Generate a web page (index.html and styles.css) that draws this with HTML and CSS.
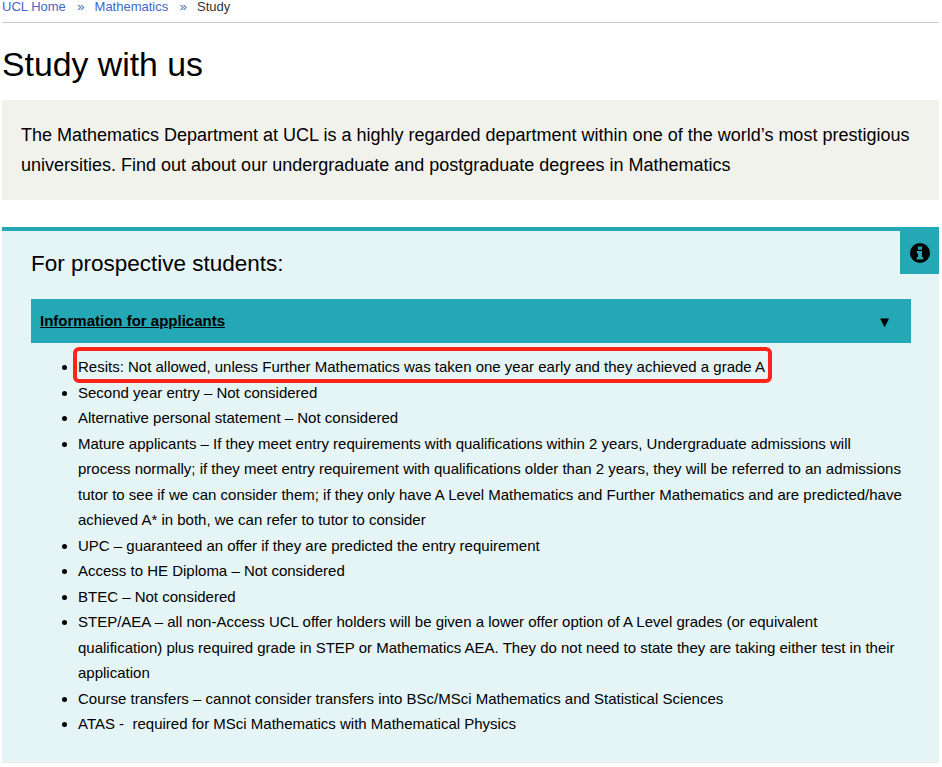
FILE: index.html
```html
<!DOCTYPE html>
<html lang="en">
<head>
  <meta charset="UTF-8" />
  <meta name="viewport" content="width=device-width, initial-scale=1" />
  <title>Study with us</title>
  <link rel="stylesheet" href="styles.css">
</head>
<body>
  <div class="page">
    <nav class="breadcrumb">
      <a href="#">UCL Home</a>
      <span class="sep">»</span>
      <a href="#">Mathematics</a>
      <span class="sep">»</span>
      <span>Study</span>
    </nav>

    <h1>Study with us</h1>

    <div class="intro">
      The Mathematics Department at UCL is a highly regarded department within one of the world’s most prestigious universities. Find out about our undergraduate and postgraduate degrees in Mathematics
    </div>

    <div class="panel">
      <div class="panel-icon">
        <svg width="20" height="20" viewBox="0 0 20 20">
          <circle cx="10" cy="10" r="10" fill="#000" />
          <rect x="8" y="3.5" width="4" height="3.2" fill="#25a8b6" />
          <path d="M6.8 8h5.2v6h1.2v2.6H6.8V14H8v-3.4H6.8z" fill="#25a8b6" />
        </svg>
      </div>
      <h2>For prospective students:</h2>

      <div class="accordion">
        <a href="#">Information for applicants</a>
        <span class="arrow">▼</span>
      </div>

      <ul class="info-list">
        <li class="marked">Resits: Not allowed, unless Further Mathematics was taken one year early and they achieved a grade A<span class="red-box"></span></li>
        <li>Second year entry – Not considered</li>
        <li>Alternative personal statement – Not considered</li>
        <li>Mature applicants – If they meet entry requirements with qualifications within 2 years, Undergraduate admissions will process normally; if they meet entry requirement with qualifications older than 2 years, they will be referred to an admissions tutor to see if we can consider them; if they only have A Level Mathematics and Further Mathematics and are predicted/have achieved A* in both, we can refer to tutor to consider</li>
        <li>UPC – guaranteed an offer if they are predicted the entry requirement</li>
        <li>Access to HE Diploma – Not considered</li>
        <li>BTEC – Not considered</li>
        <li>STEP/AEA – all non-Access UCL offer holders will be given a lower offer option of A Level grades (or equivalent qualification) plus required grade in STEP or Mathematics AEA. They do not need to state they are taking either test in their application</li>
        <li>Course transfers – cannot consider transfers into BSc/MSci Mathematics and Statistical Sciences</li>
        <li>ATAS -&nbsp; required for MSci Mathematics with Mathematical Physics</li>
      </ul>
    </div>
  </div>
</body>
</html>
```

FILE: styles.css
```css
body {
  font-family: "Liberation Sans", Arial, sans-serif;
  background: #fff;
  color: #000;
  margin: 0;
  padding: 0;
}

.page {
  width: 937px;
  margin-left: 2px;
  height: 767px;
  overflow: hidden;
}

.breadcrumb {
  height: 22px;
  border-bottom: 1px solid #ccc;
  font-size: 13px;
  line-height: 13px;
  color: #333;
  display: flex;
}
.breadcrumb a {
  color: #3f68cc;
  text-decoration: none;
}
.breadcrumb .sep {
  color: #4a6fa5;
  margin: 0 10px 0 11.5px;
}

h1 {
  font-size: 33.8px;
  font-weight: normal;
  line-height: 40px;
  margin: 21px 0 16px;
}

.intro {
  background: #f2f2ed;
  font-size: 18px;
  line-height: 30px;
  padding: 20px 19px;
  height: 60px;
  margin-bottom: 27px;
}

.panel {
  position: relative;
  background: #e5f4f5;
  border-top: 4px solid #25a8b6;
  border-bottom: 1px solid #e4ebeb;
  padding: 16px 28px 0 29px;
  height: 515px;
}

.panel-icon {
  position: absolute;
  top: 0;
  right: 0;
  width: 39px;
  height: 43px;
  background: #25a8b6;
  display: flex;
  align-items: center;
  justify-content: center;
}

h2 {
  font-size: 22.5px;
  font-weight: normal;
  line-height: 32px;
  margin: 1px 0 19px;
}

.accordion {
  background: #25a8b6;
  height: 44px;
  padding: 0 19px 2px 9px;
  box-sizing: border-box;
  display: flex;
  align-items: center;
  justify-content: space-between;
}
.accordion a {
  color: #000;
  font-size: 15px;
  font-weight: bold;
}
.arrow {
  font-size: 15px;
  line-height: 18px;
  margin-top: 3px;
}

.info-list {
  margin: 11px 0 0;
  padding: 0 8px 0 47px;
  font-size: 15px;
  line-height: 25.5px;
}

.marked {
  position: relative;
}
.red-box {
  position: absolute;
  left: -5.5px;
  top: -7.5px;
  width: 691px;
  height: 28.5px;
  border: 4px solid #ff2419;
  border-radius: 6px;
}
```
